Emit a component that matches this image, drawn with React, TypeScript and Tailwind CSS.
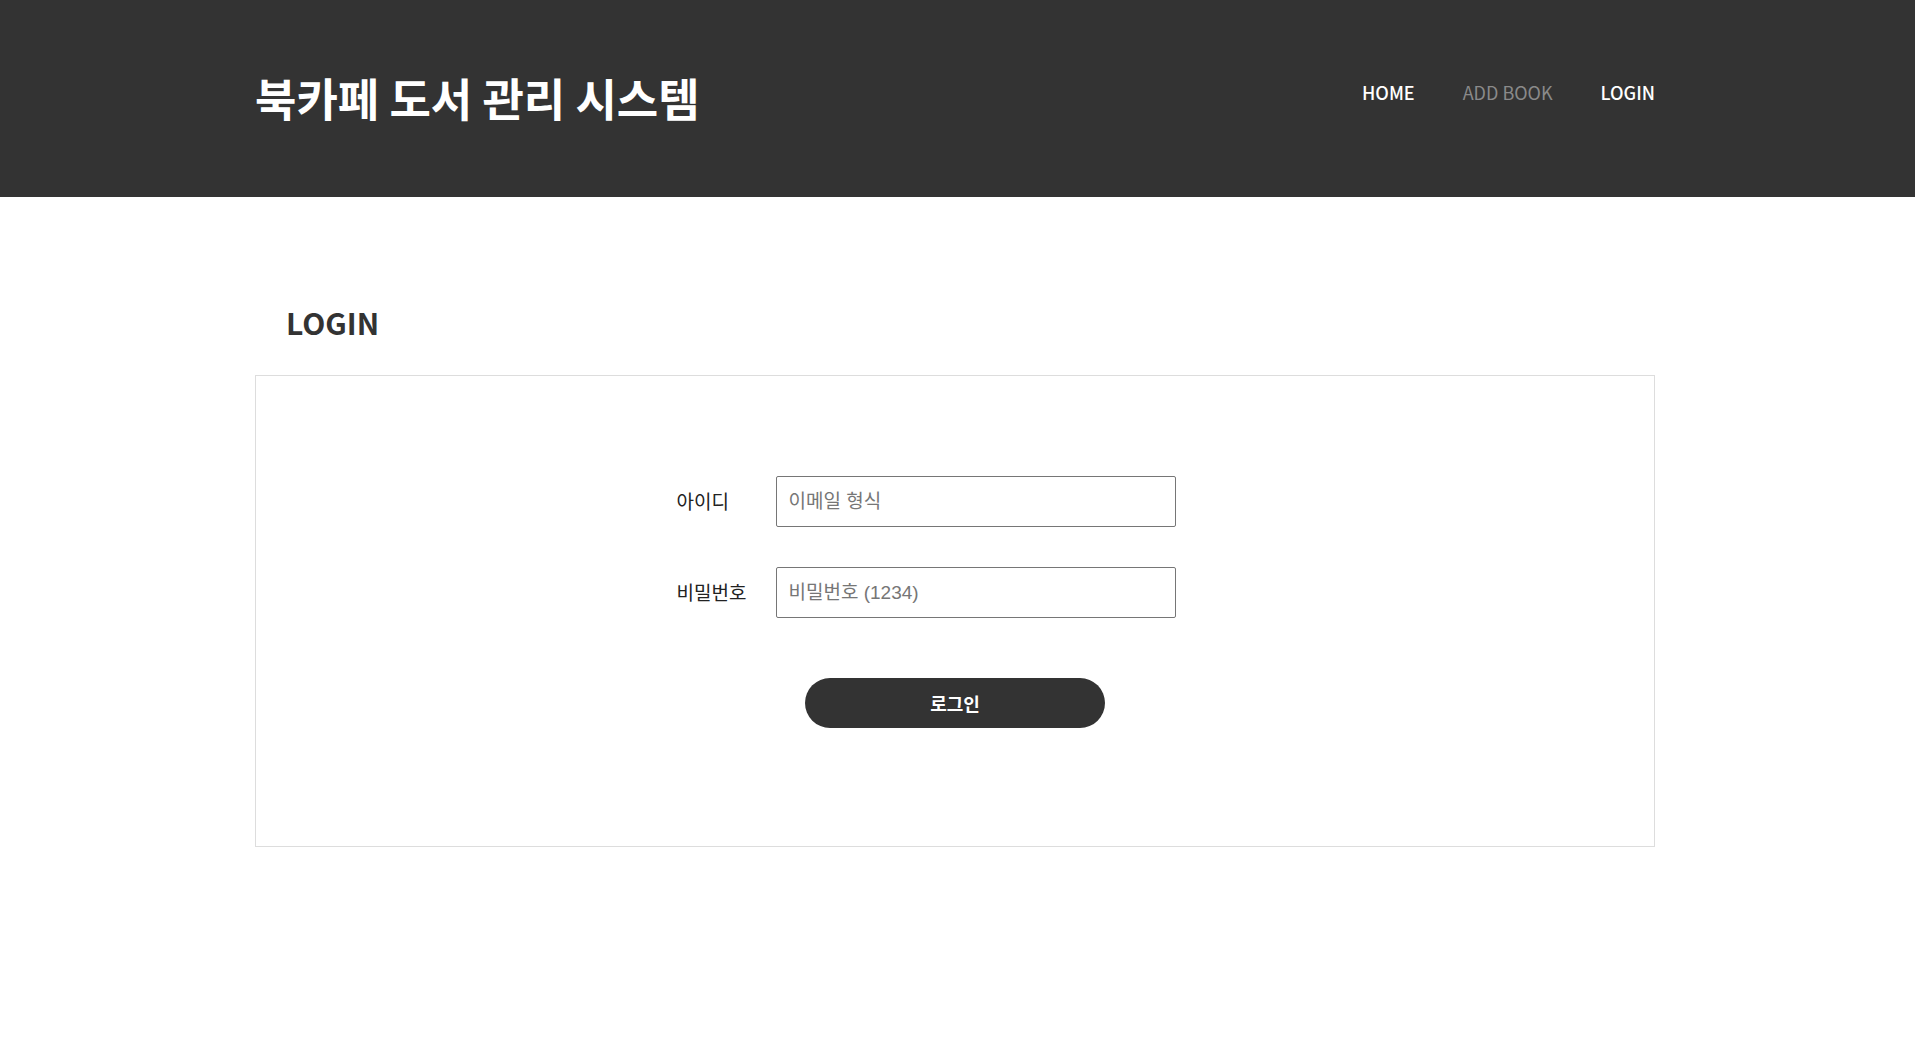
import React from "react";

const KR = "font-['Noto_Sans_CJK_KR',sans-serif]";

const Header = () => (
  <header className="bg-[#333333] h-[197px]">
    <div className={`w-[1400px] ml-[255px] h-full flex items-center justify-between ${KR}`}>
      <h1 className="text-white text-[45px] font-bold pb-[2px]">북카페 도서 관리 시스템</h1>
      <nav className="flex items-center gap-[48px] text-[18px] font-medium mb-[12px]">
        <a className="text-white">HOME</a>
        <a className="text-[#8a8a8a] font-normal">ADD BOOK</a>
        <a className="text-white">LOGIN</a>
      </nav>
    </div>
  </header>
);

const inputCls =
  "w-[400px] h-[51px] border border-[#767676] rounded-[2px] px-[12px] text-[19px] text-[#222] placeholder:text-[#767676] font-['Liberation_Sans','Noto_Sans_CJK_KR',sans-serif] outline-none";

const LoginBox = () => (
  <div className="border border-[#dddddd] h-[472px] flex flex-col items-center pt-[100px]">
    <div className="flex flex-col gap-[40px] mr-[58px]">
      <div className="flex items-center">
        <label className="w-[99px] text-[19px] text-[#222]">아이디</label>
        <input className={inputCls} placeholder="이메일 형식" />
      </div>
      <div className="flex items-center">
        <label className="w-[99px] text-[19px] text-[#222]">비밀번호</label>
        <input className={inputCls} placeholder="비밀번호 (1234)" />
      </div>
    </div>
    <button className="mt-[60px] w-[300px] h-[50px] rounded-full bg-[#333333] text-white text-[18px] font-bold">
      로그인
    </button>
  </div>
);

export default function App() {
  return (
    <div className={`min-h-screen bg-white ${KR}`}>
      <Header />
      <main className="w-[1400px] ml-[255px] pt-[110px]">
        <h2 className="text-[30px] font-bold text-[#333] pl-[31px] leading-none mb-[38px]">LOGIN</h2>
        <LoginBox />
      </main>
    </div>
  );
}
